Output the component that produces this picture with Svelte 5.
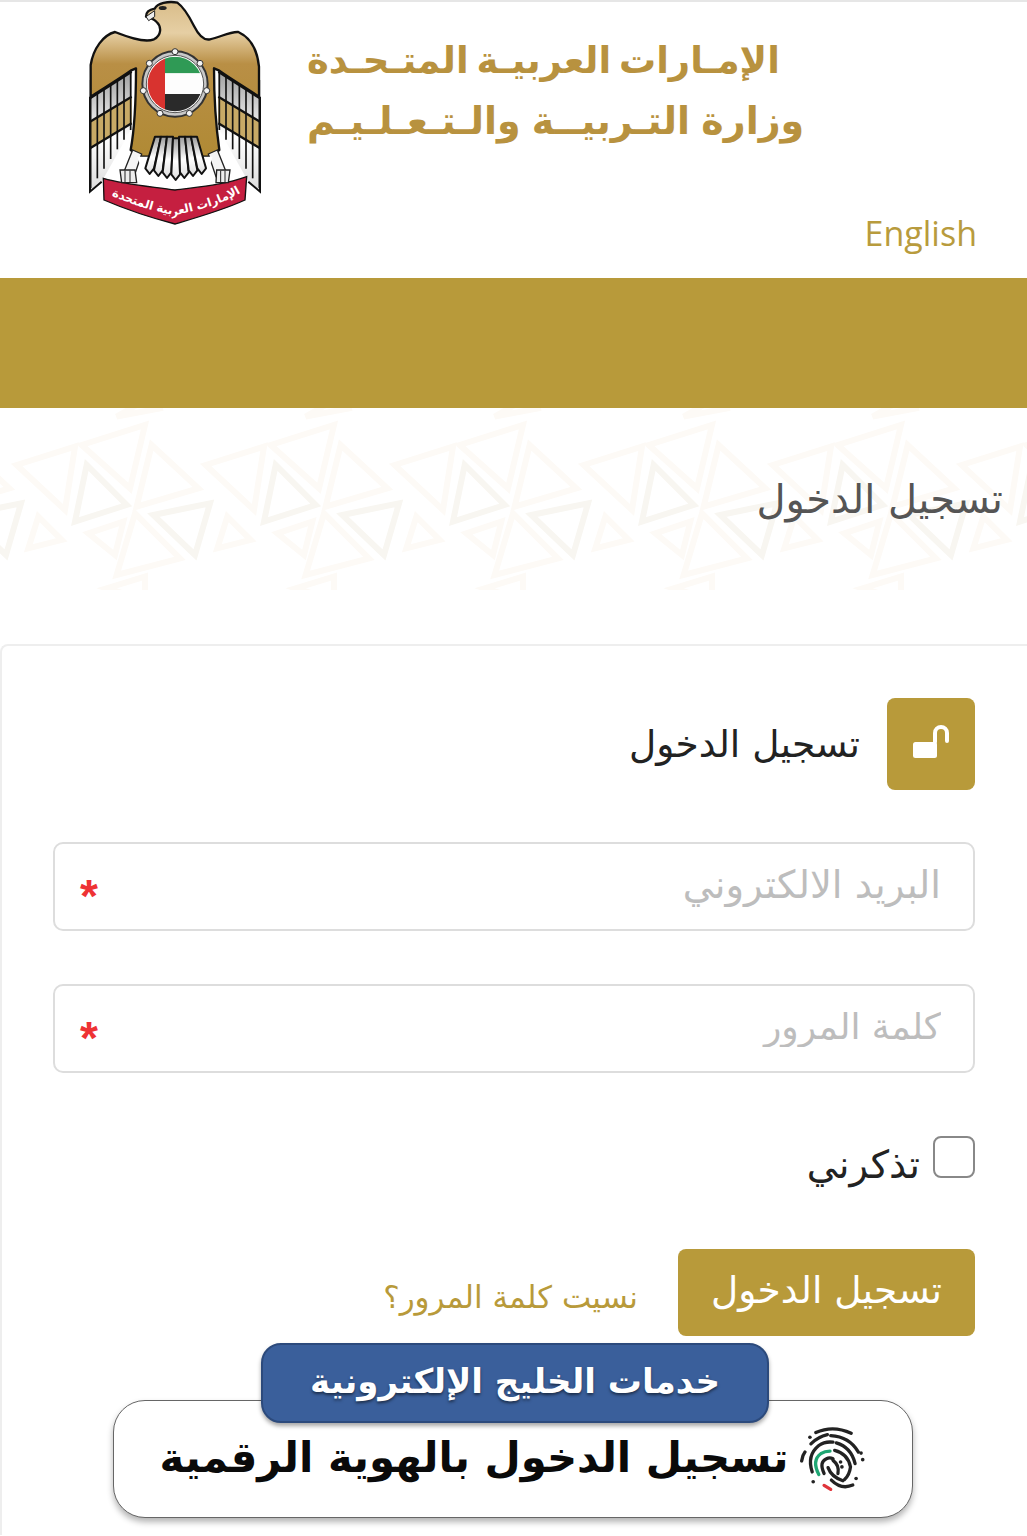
<script>
  const feathers = [0, 1, 2, 3, 4, 5, 6];
  const tail = [0, 1, 2, 3, 4, 5, 6];
  const triangles = [
    { p: '50,195 225,140 195,330', c: 'faint' },
    { p: '245,135 435,75 390,265', c: 'faint' },
    { p: '260,195 380,315 225,365', c: 'strong' },
    { p: '455,135 595,265 410,320', c: 'faint' },
    { p: '460,345 630,310 585,465', c: 'strong' },
    { p: '405,340 540,475 350,525', c: 'faint' },
    { p: '370,365 265,400 345,465', c: 'faint' },
    { p: '115,350 185,420 85,445', c: 'faint' },
    { p: '350,50 480,25 470,-20', c: 'faint' },
    { p: '320,565 435,530 435,600', c: 'faint' }
  ];
  const shifts = [-567, 0, 567];
  const stars = [[345,155],[268,190],[420,190],[250,272],[440,272],[300,340],[388,340]];
  const arcs = [
    { d: 'M103 66 Q155 42 210 68', c: '#222' },
    { d: 'M88 100 Q110 78 138 72', c: '#222' },
    { d: 'M148 75 Q205 78 232 125', c: '#222' },
    { d: 'M60 152 Q62 135 70 125', c: '#222' },
    { d: 'M92 185 Q75 135 112 105 Q130 92 155 95', c: '#222' },
    { d: 'M165 97 Q210 110 222 160', c: '#222' },
    { d: 'M112 193 Q90 150 118 130 Q130 122 146 122', c: '#1fa673' },
    { d: 'M128 190 Q112 155 135 145 Q145 140 155 145', c: '#222' },
    { d: 'M160 120 Q200 130 208 170 Q205 195 190 208', c: '#222' },
    { d: 'M155 150 Q175 165 170 190', c: '#222' },
    { d: 'M140 172 Q150 200 185 212', c: '#222' },
    { d: 'M150 210 Q180 240 215 225', c: '#222' },
    { d: 'M128 226 L148 238', c: '#e0353b' }
  ];
  const dots = [[85,80],[245,148],[225,205],[95,215],[240,128],[178,155],[182,170]];
</script>

<div class="page" dir="rtl">
  <header class="top" dir="ltr">
    <svg class="emblem" viewBox="0 0 720 720" role="img" aria-label="شعار دولة الإمارات">
      <defs>
        <linearGradient id="gold" x1="0" y1="0" x2="0" y2="1">
          <stop offset="0" stop-color="#d9bd8a"/>
          <stop offset="0.2" stop-color="#e6cfa4"/>
          <stop offset="0.4" stop-color="#b98f45"/>
          <stop offset="1" stop-color="#b08a35"/>
        </linearGradient>
        <linearGradient id="feather" x1="0" y1="0" x2="0" y2="1">
          <stop offset="0" stop-color="#9a9a9a"/>
          <stop offset="0.55" stop-color="#ffffff"/>
          <stop offset="1" stop-color="#dcdcdc"/>
        </linearGradient>
        <clipPath id="flag"><circle cx="345" cy="252" r="82"/></clipPath>
        <path id="ribbonText" d="M125 572 C200 610 280 635 345 645 C420 630 500 610 570 560"/>
        <g id="wing">
          <path d="M475 205 L600 295 L600 575 L565 545 L475 385 Z" fill="url(#feather)"/>
          <path d="M475 290 L600 365 L600 445 L475 370 Z" fill="#c8aa66"/>
          {#each feathers as f}
            <line x1={478 + f * 20} y1={180 + f * 10} x2={478 + f * 20} y2={390 + f * 29} stroke="#111" stroke-width="5"/>
          {/each}
          <path d="M475 215 L600 295 M475 290 L600 365 M475 370 L600 445" fill="none" stroke="#111" stroke-width="7"/>
          <path d="M600 290 L600 575 L565 545" fill="none" stroke="#111" stroke-width="6"/>
        </g>
      </defs>

      <use href="#wing"/>
      <use href="#wing" transform="translate(690 0) scale(-1 1)"/>

      <path d="M258 50 C258 35 272 28 284 26 C292 10 325 2 352 8 C372 22 388 50 402 78 C416 106 432 122 450 118 C480 112 510 94 535 96 C570 112 592 150 597 200 L597 290 C560 265 510 235 478 212 L462 205 C462 270 468 380 478 450 L450 470 L240 470 L212 450 C225 380 228 270 228 205 L212 212 C180 235 130 265 92 290 L92 195 C100 145 130 105 165 96 C195 108 250 130 282 118 C305 105 305 80 290 66 C280 56 268 52 258 50 Z" fill="url(#gold)" stroke="#111" stroke-width="7" stroke-linejoin="round"/>
      <path d="M258 50 L266 62 L284 50 L284 32 Z" fill="#eee" stroke="#222" stroke-width="3"/>
      <ellipse cx="308" cy="24" rx="12" ry="6" fill="#222"/>

      <path d="M218 450 L245 462 L222 530 L190 520 Z M472 450 L445 462 L468 530 L500 520 Z" fill="#f4f4f4" stroke="#222" stroke-width="4"/>
      <path d="M232 470 L458 470 L440 525 L345 550 L250 525 Z" fill="#fff"/>
      <g stroke="#111" stroke-width="6" stroke-linejoin="round">
        {#each tail as t}
          <path d="M{285 + t * 18} {415 - (t === 3 ? 0 : 5)} L{256 + t * 26} {505 + (3 - Math.abs(t - 3)) * 6} L{269 + t * 26} {522 + (3 - Math.abs(t - 3)) * 6} L{282 + t * 26} {505 + (3 - Math.abs(t - 3)) * 6} L{303 + t * 18} {415 - (t === 3 ? 0 : 5)} Z" fill="url(#feather)"/>
        {/each}
      </g>

      <path d="M130 535 C200 555 280 560 345 570 C420 560 490 555 560 530 L555 600 C490 630 420 650 345 672 C260 650 190 625 132 600 Z" fill="#c51f40" stroke="#111" stroke-width="4"/>
      <path d="M180 510 L225 510 L230 548 L185 548 Z M470 510 L510 510 L505 548 L468 548 Z" fill="#eee" stroke="#222" stroke-width="4"/>
      <path d="M195 512 V546 M210 512 V548 M482 512 V548 M495 512 V546" stroke="#222" stroke-width="3"/>
      <text class="ribbon-text" fill="#fff"><textPath href="#ribbonText" startOffset="50%" text-anchor="middle">الإمارات العربية المتحدة</textPath></text>

      <circle cx="345" cy="252" r="98" fill="#c8c8c8" stroke="#333" stroke-width="6"/>
      <circle cx="345" cy="252" r="86" fill="#fff" stroke="#555" stroke-width="3"/>
      <g clip-path="url(#flag)">
        <rect x="260" y="170" width="55" height="165" fill="#d8332f"/>
        <rect x="315" y="170" width="115" height="50" fill="#2f9a55"/>
        <rect x="315" y="220" width="115" height="62" fill="#fdfdfd"/>
        <rect x="315" y="282" width="115" height="55" fill="#2a2a2a"/>
      </g>
      {#each stars as s}
        <circle cx={s[0]} cy={s[1]} r="9" fill="#f4f4f4" stroke="#333" stroke-width="3"/>
      {/each}
    </svg>

    <div class="wordmark" dir="rtl">
      <span class="line one">الإمـارات العربيـة المتـحـدة</span>
      <span class="line two">وزارة التـربيــة والـتـعـلـيـم</span>
    </div>

    <a class="lang" href="#en">English</a>
  </header>

  <div class="band"></div>

  <section class="hero">
    <svg class="pattern" aria-hidden="true">
      <defs>
        <pattern id="tri" width="189" height="182" patternUnits="userSpaceOnUse">
          <g transform="scale(0.3333) translate(0 -24)">
            {#each shifts as s}
              <g transform="translate({s} 0)">
                {#each triangles as t}
                  <polygon points={t.p} class={t.c}/>
                {/each}
              </g>
            {/each}
          </g>
        </pattern>
      </defs>
      <rect width="100%" height="100%" fill="url(#tri)"/>
    </svg>
    <h1 class="hero-title">تسجيل الدخول</h1>
  </section>

  <main class="card">
    <div class="card-head">
      <span class="lock">
        <svg viewBox="0 0 40 40" width="40" height="40" aria-hidden="true">
          <rect x="2" y="18" width="24" height="16" rx="2.5" fill="#fff"/>
          <path d="M24 18 V9 A6 6 0 0 1 36 9 V17" fill="none" stroke="#fff" stroke-width="4" stroke-linecap="round"/>
        </svg>
      </span>
      <h2>تسجيل الدخول</h2>
    </div>

    <label class="field mail">
      <input type="text" placeholder="البريد الالكتروني" />
      <span class="req">*</span>
    </label>
    <label class="field pass">
      <input type="password" placeholder="كلمة المرور" />
      <span class="req">*</span>
    </label>

    <label class="remember">
      <span class="box"></span>
      <span>تذكرني</span>
    </label>

    <div class="actions">
      <button type="button" class="submit">تسجيل الدخول</button>
      <a class="forgot" href="#forgot">نسيت كلمة المرور؟</a>
    </div>

    <div class="gulf">
      <div class="uaepass">
        <svg class="print" viewBox="55 50 200 195" aria-hidden="true">
          {#each arcs as a}
            <path d={a.d} fill="none" stroke={a.c} stroke-width="10" stroke-linecap="round"/>
          {/each}
          {#each dots as d}
            <circle cx={d[0]} cy={d[1]} r="5.5" fill="#222"/>
          {/each}
        </svg>
        <span>تسجيل الدخول بالهوية الرقمية</span>
      </div>
      <div class="badge">خدمات الخليج الإلكترونية</div>
    </div>
  </main>
</div>

<style>
  :global(body) {
    margin: 0;
    background: #fff;
  }
  .page {
    font-family: "DejaVu Sans", "Noto Sans", sans-serif;
    width: 1027px;
    height: 1536px;
    overflow: hidden;
    background: #fff;
  }
  .top {
    box-sizing: border-box;
    height: 278px;
    border-top: 2px solid #e6e6e6;
    display: flex;
    align-items: flex-start;
    padding-left: 60px;
    padding-right: 50px;
  }
  .emblem {
    width: 240px;
    height: 240px;
    margin-top: -2px;
    flex: none;
  }
  .ribbon-text {
    font-size: 35px;
    font-weight: 700;
  }
  .wordmark {
    display: flex;
    flex-direction: column;
    align-items: flex-end;
    margin-left: 7px;
    margin-top: 29px;
    width: 495px;
    flex: none;
  }
  .line {
    font-weight: 700;
    color: #b8923f;
    font-size: 38px;
    line-height: 60px;
    white-space: nowrap;
  }
  .line.one {
    font-size: 37px;
    word-spacing: -5px;
  }
  .line.two {
    word-spacing: -2px;
  }
  .lang {
    margin-left: auto;
    align-self: flex-end;
    margin-bottom: 22px;
    font-family: "Open Sans", sans-serif;
    font-size: 34px;
    line-height: 46px;
    color: #b89b3d;
    text-decoration: none;
  }
  .band {
    height: 130px;
    background: #b89a3a;
  }
  .hero {
    position: relative;
    height: 182px;
    display: flex;
    align-items: center;
    padding-right: 24px;
    margin-bottom: 55px;
  }
  .pattern {
    position: absolute;
    inset: 0;
    width: 100%;
    height: 100%;
  }
  .pattern polygon {
    fill: none;
    stroke-width: 18;
  }
  .pattern .faint {
    stroke: #fdfaf6;
  }
  .pattern .strong {
    stroke: #f8f6f1;
  }
  .hero-title {
    position: relative;
    margin: 0;
    font-size: 40px;
    font-weight: 400;
    color: #555;
    line-height: 50px;
  }
  .card {
    box-sizing: border-box;
    height: 891px;
    margin-top: -1px;
    border-top: 2px solid #eee;
    border-left: 2px solid #eee;
    border-top-left-radius: 8px;
    padding: 52px 52px 0 51px;
  }
  .card-head {
    display: flex;
    align-items: center;
    gap: 27px;
    margin-bottom: 52px;
  }
  .lock {
    width: 88px;
    height: 92px;
    background: #b89a3a;
    border-radius: 8px;
    display: flex;
    align-items: center;
    justify-content: center;
  }
  .card-head h2 {
    margin: 0;
    font-size: 37.5px;
    font-weight: 400;
    color: #222;
  }
  .field {
    display: block;
    position: relative;
    margin-bottom: 53px;
  }
  .field input {
    box-sizing: border-box;
    display: block;
    width: 100%;
    height: 89px;
    border: 2px solid #ddd;
    border-radius: 10px;
    background: #fff;
    padding: 0 32px 4px 60px;
    font-family: inherit;
    outline: none;
  }
  .mail input {
    font-size: 38.5px;
  }
  .pass input {
    font-size: 36px;
  }
  .field input::placeholder {
    color: #bdbdbd;
    opacity: 1;
  }
  .req {
    position: absolute;
    left: 27px;
    top: 29px;
    font-family: "Liberation Sans", sans-serif;
    font-weight: 700;
    font-size: 46px;
    line-height: 50px;
    color: #ee3234;
  }
  .remember {
    display: flex;
    align-items: flex-start;
    gap: 13px;
    margin-top: 63px;
    font-size: 38.5px;
    color: #222;
    line-height: 58px;
  }
  .box {
    box-sizing: border-box;
    width: 42px;
    height: 42px;
    border: 2.5px solid #888;
    border-radius: 8px;
    background: #fff;
  }
  .actions {
    display: flex;
    align-items: center;
    gap: 40px;
    margin-top: 55px;
  }
  .submit {
    width: 297px;
    height: 87px;
    border: 0;
    border-radius: 8px;
    background: #b89a3a;
    color: #fff;
    font-family: inherit;
    font-size: 37.5px;
    padding: 0 0 6px;
  }
  .forgot {
    color: #b89a3a;
    font-size: 31px;
    text-decoration: none;
    margin-top: 8px;
  }
  .gulf {
    position: relative;
    margin-top: 64px;
    margin-right: 62px;
    width: 800px;
    box-sizing: border-box;
  }
  .uaepass {
    box-sizing: border-box;
    height: 118px;
    border: 1.5px solid #666;
    border-radius: 32px;
    box-shadow: 0 4px 6px rgba(0, 0, 0, 0.3);
    background: #fff;
    display: flex;
    align-items: center;
    justify-content: center;
    gap: 12px;
    color: #0a0a0a;
    font-weight: 700;
    font-size: 41.8px;
    white-space: nowrap;
  }
  .uaepass span {
    margin-bottom: 4px;
  }
  .print {
    width: 66px;
    height: 65px;
    flex: none;
  }
  .badge {
    position: absolute;
    top: -57px;
    left: 148px;
    box-sizing: border-box;
    width: 508px;
    height: 80px;
    border-radius: 20px;
    background: #3a5f9b;
    border: 2px solid #2c4a7c;
    box-shadow: 0 3px 4px rgba(0, 0, 0, 0.35);
    color: #fff;
    font-weight: 700;
    font-size: 34px;
    line-height: 72px;
    text-align: center;
    text-shadow: 0 2px 3px rgba(0, 0, 0, 0.5);
    white-space: nowrap;
  }
</style>
